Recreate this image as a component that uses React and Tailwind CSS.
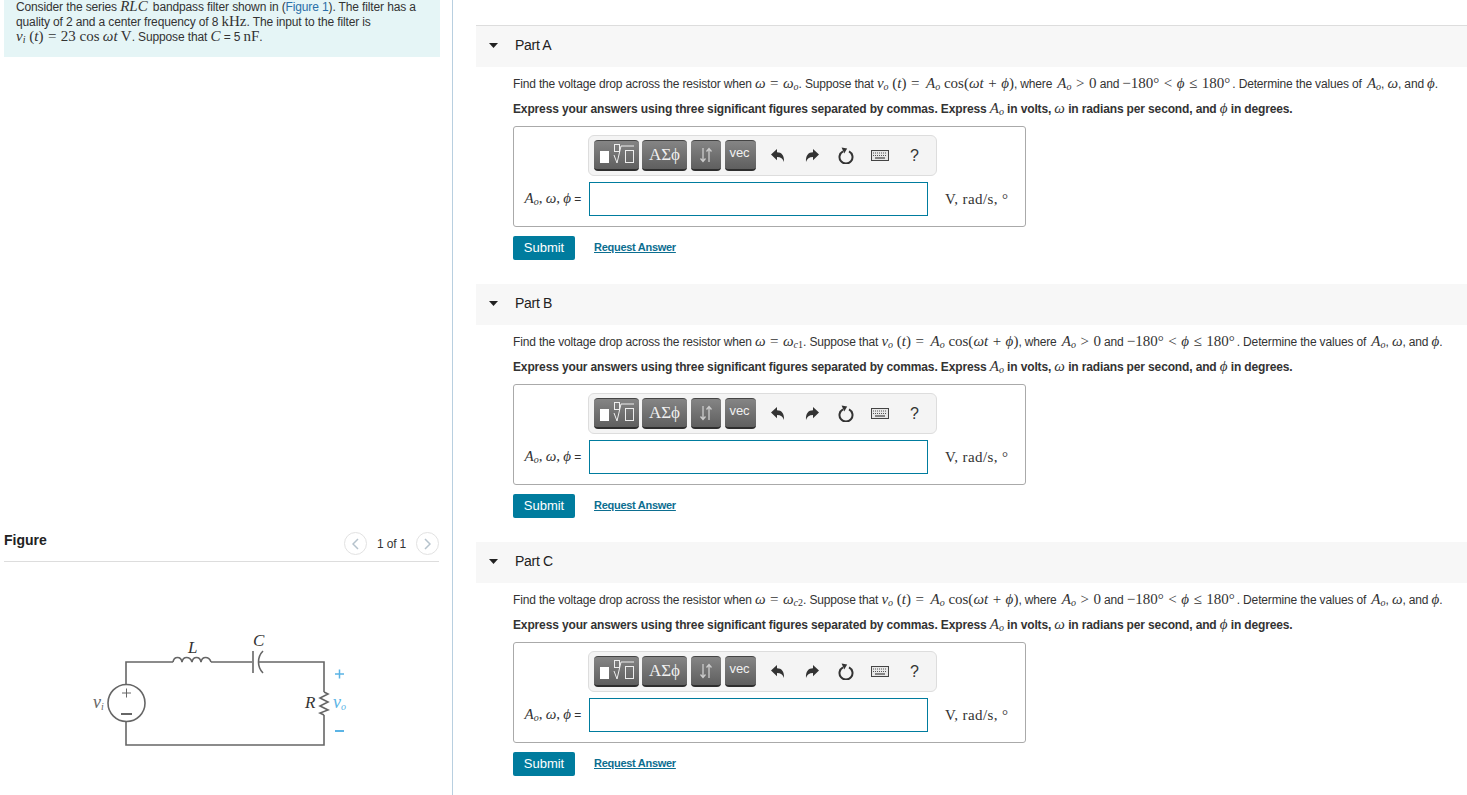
const serif = "font-['Liberation_Serif',serif]";

function I({ className = "", children }) {
  return <span className={`${serif} italic text-[15px] tracking-normal font-normal leading-none ${className}`}>{children}</span>;
}
function R({ className = "", children }) {
  return <span className={`${serif} text-[15px] tracking-normal font-normal leading-none ${className}`}>{children}</span>;
}
function Rel({ children }) {
  return <span className={`${serif} text-[15px] tracking-normal font-normal leading-none mx-[4.500px]`}>{children}</span>;
}
function S({ children }) {
  return <span className={`${serif} italic text-[10px] tracking-normal font-normal align-[-2px] leading-none`}>{children}</span>;
}

function ToolBtn({ className, children }) {
  return (
    <div className={`h-[31px] rounded-[4px] border-b-2 border-b-[#2e2e2e] border-t border-t-[#444] bg-gradient-to-b from-[#858585] to-[#5f5f5f] flex items-center justify-center text-[#f0f0f0] ${className}`}>
      {children}
    </div>
  );
}

function Toolbar() {
  return (
    <div className="w-[349px] h-[41px] rounded-[6px] border border-[#dddddd] bg-[#f4f4f4] flex items-center pl-[5px]">
      <ToolBtn className="w-[45px] mr-[3px]">
        <svg width="45" height="28" viewBox="0 1 45 28" fill="none">
          <rect x="6" y="11" width="9" height="12" fill="#fff" />
          <rect x="20.500" y="4.500" width="5" height="7" stroke="#eee" strokeWidth="1" />
          <path d="M20 15l3 8 4-17h13" stroke="#eee" strokeWidth="1" />
          <rect x="31.500" y="10.500" width="8" height="12" stroke="#eee" strokeWidth="1" />
        </svg>
      </ToolBtn>
      <ToolBtn className={`w-[45px] mr-[4px] ${serif} text-[17px]`}>ΑΣϕ</ToolBtn>
      <ToolBtn className="w-[30px] mr-[4px]">
        <svg width="16" height="16" viewBox="0 0 16 16" fill="none" stroke="#ccc" strokeWidth="1.300">
          <path d="M5 1v13M2.500 11.500L5 14.500l2.500-3M11 15V2M8.500 4.500L11 1.500l2.500 3" />
        </svg>
      </ToolBtn>
      <ToolBtn className="w-[31px] items-start">
        <span className="text-[13px] leading-[14px] pt-[5px] pr-[2px] font-['Liberation_Sans',sans-serif]">vec</span>
      </ToolBtn>
      <svg className="ml-[15px]" width="14" height="14" viewBox="0 0 14 14" fill="#333">
        <path d="M0 5.500L6 0v3.300c4.600 0 7.400 3.200 7 9.700C11.800 9.600 9.900 8 6 8v3.200z" />
      </svg>
      <svg className="ml-[20px]" width="14" height="14" viewBox="0 0 14 14" fill="#333">
        <path d="M14 5.500L8 0v3.300C3.400 3.300.6 6.500 1 13 2.200 9.600 4.100 8 8 8v3.200z" />
      </svg>
      <svg className="ml-[19px]" width="16" height="17" viewBox="0 0 16 17" fill="none">
        <path d="M5 4.300a6.500 6.500 0 1 0 6 0" stroke="#333" strokeWidth="2" />
        <path d="M3.600 0.600l5.600.9-3 4.900z" fill="#333" />
      </svg>
      <svg className="ml-[17px]" width="18" height="11" viewBox="0 0 18 11" fill="none">
        <rect x="0.500" y="0.500" width="17" height="10" fill="#e8e8e8" stroke="#444" />
        <path d="M2 3h14M2 5.500h14" stroke="#555" strokeWidth="1.200" strokeDasharray="1 1" />
        <path d="M4 8h10" stroke="#444" strokeWidth="1.200" />
      </svg>
      <span className="ml-[21px] text-[16px] text-[#333] font-['Liberation_Sans',sans-serif]">?</span>
    </div>
  );
}

function Part({ name, sub }) {
  return (
    <section className="h-[258px]">
      <div className="h-[41px] pb-[3px] bg-[#f7f7f7] flex items-center">
        <svg className="ml-[13px]" width="9" height="5" viewBox="0 0 9 5" fill="#222">
          <path d="M0 0h9L4.500 5z" />
        </svg>
        <h2 className="ml-[17px] text-[14px] tracking-[-0.300px] text-[#222] font-normal">Part {name}</h2>
      </div>
      <div className="pl-[37px]">
        <p className="mt-[9px] h-[17px] leading-[17px] text-[12px] tracking-[-0.160px] text-[#333] whitespace-nowrap">
          Find the voltage drop across the resistor when <I>ω</I><Rel>=</Rel><I>ω</I><S>{sub}</S>. Suppose that <I>v</I><S>o</S><R> (</R><I>t</I><R>)</R><Rel>=</Rel><I className="ml-[2px]">A</I><S>o</S><R> cos(</R><I>ωt</I><Rel>+</Rel><I>ϕ</I><R>)</R>, where <I className="ml-[2px]">A</I><S>o</S><Rel>&gt;</Rel><R>0</R> and <R>−180°</R><Rel>&lt;</Rel><I>ϕ</I><Rel>≤</Rel><R>180°</R><span className="ml-[2px]">.</span> Determine the values of <I className="ml-[2px]">A</I><S>o</S>, <I>ω</I>, and <I>ϕ</I>.
        </p>
        <p className="mt-[8px] h-[17px] leading-[17px] text-[12px] tracking-[-0.140px] font-bold text-[#333] whitespace-nowrap">
          Express your answers using three significant figures separated by commas. Express <I>A</I><S>o</S> in volts, <I>ω</I> in radians per second, and <I>ϕ</I> in degrees.
        </p>
        <div className="mt-[8px] w-[513px] h-[101px] rounded-[3px] border border-[#aaaaaa] pt-[8px]">
          <div className="ml-[74px]"><Toolbar /></div>
          <div className="flex items-center mt-[6px]">
            <div className="w-[75px] text-right pr-[8px] text-[12px] tracking-[-0.170px] text-[#333] whitespace-nowrap">
              <I>A</I><S>o</S><R>,</R> <I>ω</I><R>,</R> <I>ϕ</I> =
            </div>
            <div className="w-[339px] h-[34px] border border-[#007c9e] bg-white" />
            <div className={`ml-[17px] text-[15px] tracking-[0.400px] text-[#333] ${serif} whitespace-nowrap`}>V, rad/s, °</div>
          </div>
        </div>
        <div className="flex items-center mt-[9px]">
          <button className="w-[62px] h-[24px] rounded-[2px] bg-[#007c9e] text-white text-[13px] font-normal">Submit</button>
          <a className="ml-[19px] -mt-px text-[11px] tracking-[-0.280px] font-bold text-[#0c6e90] underline">Request Answer</a>
        </div>
      </div>
    </section>
  );
}

function Circuit() {
  return (
    <svg width="300" height="140" viewBox="0 0 300 140" fill="none" className="block">
      <g stroke="#666" strokeWidth="1.600">
        <path d="M66 65V42h47" />
        <path d="M113 42c1-6 8-6 9 0c1-6 8-6 10 0c1-6 8-6 9 0c1-6 8-6 10 0" />
        <path d="M151 42h41" />
        <path d="M193 31v22" />
        <path d="M203 31c-6 6-6 16 0 22" />
        <path d="M199 42h65v30" />
        <path d="M264 72l4 2-8 4 8 4-8 4 8 4-8 3 4 2" />
        <path d="M264 95v30H66v-23" />
        <circle cx="66.500" cy="83" r="18.500" />
        <path d="M62 73h9M66.500 68.500v9" strokeWidth="1" />
        <path d="M61 94h11" strokeWidth="2" />
      </g>
      <g stroke="#5bb4e5" strokeWidth="1.500">
        <path d="M275 54h9M279.500 49.500v9" />
        <path d="M275 111h9" strokeWidth="2" />
      </g>
      <text x="128" y="33" fontFamily="Liberation Serif" fontStyle="italic" fontSize="17" fill="#333">L</text>
      <text x="193" y="26" fontFamily="Liberation Serif" fontStyle="italic" fontSize="17" fill="#333">C</text>
      <text x="245" y="88" fontFamily="Liberation Serif" fontStyle="italic" fontSize="17" fill="#333">R</text>
      <text x="33" y="88" fontFamily="Liberation Serif" fontStyle="italic" fontSize="18" fill="#666">v</text>
      <text x="41" y="90" fontFamily="Liberation Serif" fontStyle="italic" fontSize="10" fill="#666">i</text>
      <text x="273" y="88" fontFamily="Liberation Serif" fontStyle="italic" fontSize="18" fill="#5bb4e5">v</text>
      <text x="281" y="90" fontFamily="Liberation Serif" fontStyle="italic" fontSize="10" fill="#5bb4e5">o</text>
    </svg>
  );
}

export default function App() {
  return (
    <div className="h-[795px] w-[1467px] overflow-hidden bg-white flex font-['Liberation_Sans',sans-serif] text-[#333]">
      <aside className="w-[453px] shrink-0 border-r border-[#b8cfe0] pl-[4px]">
        <div className="w-[436px] h-[57px] bg-[#e5f5f6] pl-[12px] text-[12px] tracking-[-0.130px] leading-[14px] text-[#333] flow-root">
          <p className="whitespace-nowrap -mt-px">
            Consider the series <I className="mr-[2px]">RLC</I> bandpass filter shown in (<span className="text-[#2a6fa8]">Figure 1</span>). The filter has a<br />
            quality of 2 and a center frequency of 8 <R>kHz</R>. The input to the filter is<br />
            <I>v</I><S>i</S><R> (</R><I>t</I><R>)</R><Rel>=</Rel><R>23 cos</R> <I>ωt</I> <R>V</R>. Suppose that <I>C</I> = 5 <R>nF</R>.
          </p>
        </div>
        <div className="mt-[472px] w-[435px] h-[33px] border-b border-[#dddddd] flex items-start justify-between">
          <h3 className="text-[14px] font-bold text-[#222] leading-[22px]">Figure</h3>
          <div className="flex items-center mt-[3px]">
            <span className="w-[23px] h-[23px] rounded-full border border-[#e2e2e2] flex items-center justify-center">
              <svg width="7" height="12" viewBox="0 0 7 12" fill="none" stroke="#b5c2cc" strokeWidth="1.500"><path d="M6 1L1 6l5 5" /></svg>
            </span>
            <span className="mx-[10px] text-[12px] tracking-[-0.170px] text-[#333]">1 of 1</span>
            <span className="w-[23px] h-[23px] rounded-full border border-[#e2e2e2] flex items-center justify-center">
              <svg width="7" height="12" viewBox="0 0 7 12" fill="none" stroke="#b5c2cc" strokeWidth="1.500"><path d="M1 1l5 5-5 5" /></svg>
            </span>
          </div>
        </div>
        <div className="mt-[58px] ml-[56px]"><Circuit /></div>
      </aside>
      <main className="flex-1 pl-[23px] pt-[25px] min-w-0">
        <div className="h-px bg-[#dddddd]" />
        <Part name="A" sub="o" />
        <Part name="B" sub={<>c<span className="not-italic">1</span></>} />
        <Part name="C" sub={<>c<span className="not-italic">2</span></>} />
      </main>
    </div>
  );
}
